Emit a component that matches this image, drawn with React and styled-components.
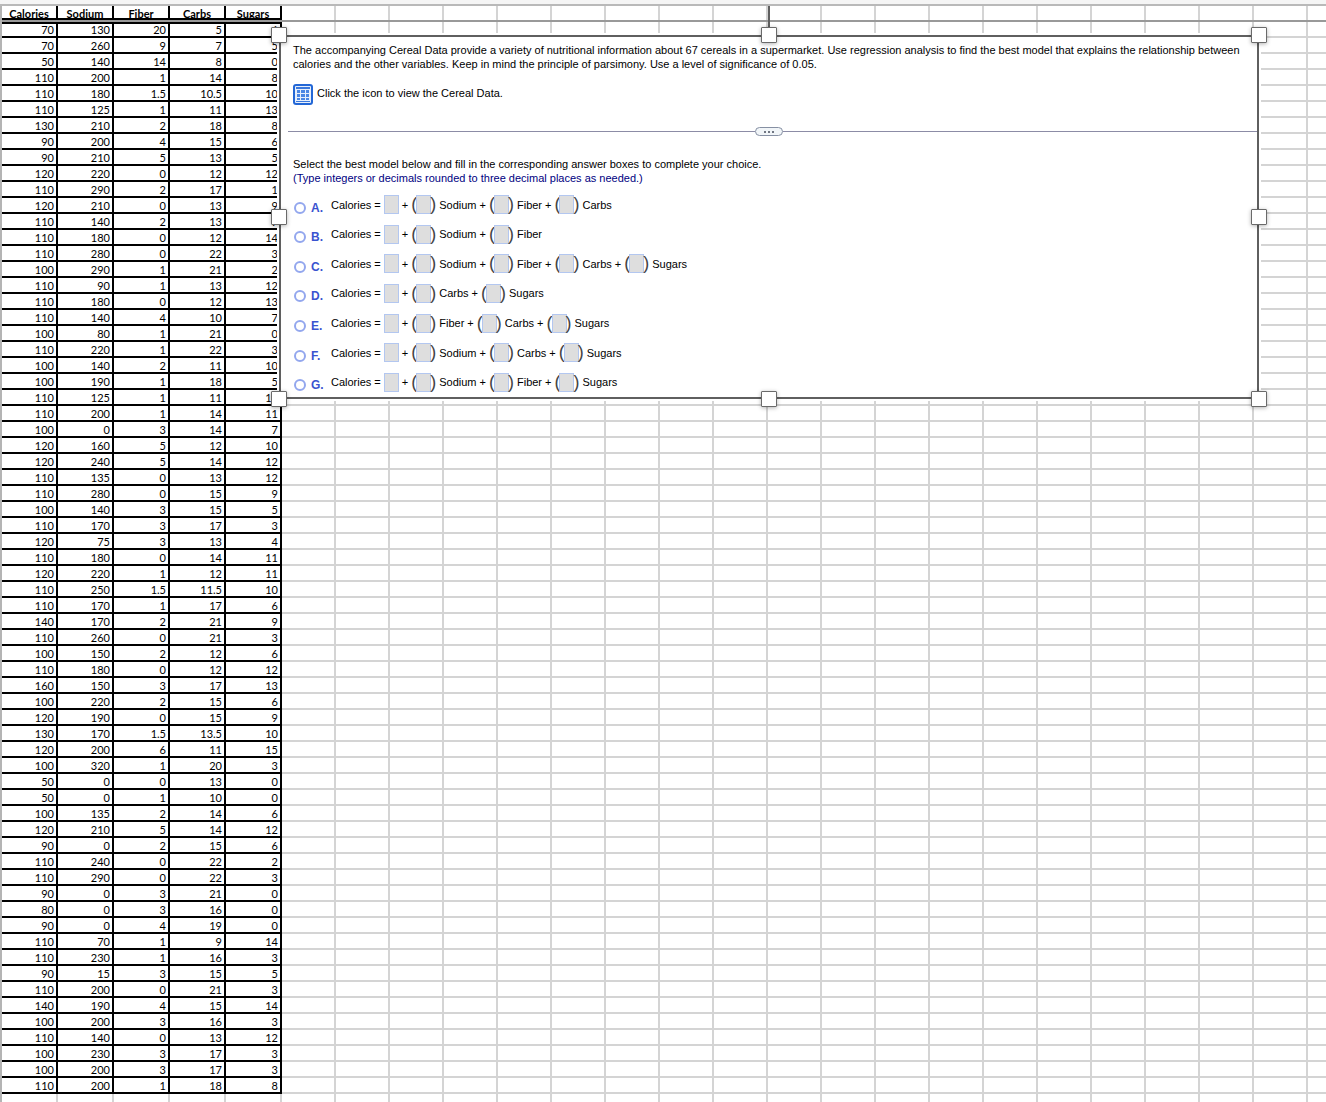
import React from 'react';
import styled, { createGlobalStyle } from 'styled-components';

const columns = ['Calories', 'Sodium', 'Fiber', 'Carbs', 'Sugars'];

const cereals = [
  [70, 130, 20, 5, 6],
  [70, 260, 9, 7, 5],
  [50, 140, 14, 8, 0],
  [110, 200, 1, 14, 8],
  [110, 180, 1.5, 10.5, 10],
  [110, 125, 1, 11, 13],
  [130, 210, 2, 18, 8],
  [90, 200, 4, 15, 6],
  [90, 210, 5, 13, 5],
  [120, 220, 0, 12, 12],
  [110, 290, 2, 17, 1],
  [120, 210, 0, 13, 9],
  [110, 140, 2, 13, 7],
  [110, 180, 0, 12, 14],
  [110, 280, 0, 22, 3],
  [100, 290, 1, 21, 2],
  [110, 90, 1, 13, 12],
  [110, 180, 0, 12, 13],
  [110, 140, 4, 10, 7],
  [100, 80, 1, 21, 0],
  [110, 220, 1, 22, 3],
  [100, 140, 2, 11, 10],
  [100, 190, 1, 18, 5],
  [110, 125, 1, 11, 13],
  [110, 200, 1, 14, 11],
  [100, 0, 3, 14, 7],
  [120, 160, 5, 12, 10],
  [120, 240, 5, 14, 12],
  [110, 135, 0, 13, 12],
  [110, 280, 0, 15, 9],
  [100, 140, 3, 15, 5],
  [110, 170, 3, 17, 3],
  [120, 75, 3, 13, 4],
  [110, 180, 0, 14, 11],
  [120, 220, 1, 12, 11],
  [110, 250, 1.5, 11.5, 10],
  [110, 170, 1, 17, 6],
  [140, 170, 2, 21, 9],
  [110, 260, 0, 21, 3],
  [100, 150, 2, 12, 6],
  [110, 180, 0, 12, 12],
  [160, 150, 3, 17, 13],
  [100, 220, 2, 15, 6],
  [120, 190, 0, 15, 9],
  [130, 170, 1.5, 13.5, 10],
  [120, 200, 6, 11, 15],
  [100, 320, 1, 20, 3],
  [50, 0, 0, 13, 0],
  [50, 0, 1, 10, 0],
  [100, 135, 2, 14, 6],
  [120, 210, 5, 14, 12],
  [90, 0, 2, 15, 6],
  [110, 240, 0, 22, 2],
  [110, 290, 0, 22, 3],
  [90, 0, 3, 21, 0],
  [80, 0, 3, 16, 0],
  [90, 0, 4, 19, 0],
  [110, 70, 1, 9, 14],
  [110, 230, 1, 16, 3],
  [90, 15, 3, 15, 5],
  [110, 200, 0, 21, 3],
  [140, 190, 4, 15, 14],
  [100, 200, 3, 16, 3],
  [110, 140, 0, 13, 12],
  [100, 230, 3, 17, 3],
  [100, 200, 3, 17, 3],
  [110, 200, 1, 18, 8],
];

const models = [
  { letter: 'A', terms: ['Sodium', 'Fiber', 'Carbs'] },
  { letter: 'B', terms: ['Sodium', 'Fiber'] },
  { letter: 'C', terms: ['Sodium', 'Fiber', 'Carbs', 'Sugars'] },
  { letter: 'D', terms: ['Carbs', 'Sugars'] },
  { letter: 'E', terms: ['Fiber', 'Carbs', 'Sugars'] },
  { letter: 'F', terms: ['Sodium', 'Carbs', 'Sugars'] },
  { letter: 'G', terms: ['Sodium', 'Fiber', 'Sugars'] },
];

const handles = [
  ['start', 'start'],
  ['middle', 'start'],
  ['end', 'start'],
  ['start', 'middle'],
  ['end', 'middle'],
  ['start', 'end'],
  ['middle', 'end'],
  ['end', 'end'],
];

const CerealTable = () => (
  <Table>
    <thead>
      <tr>
        {columns.map(name => (
          <HeadCell key={name} scope="col">
            <HeadText>{name}</HeadText>
          </HeadCell>
        ))}
      </tr>
    </thead>
    <tbody>
      {cereals.map((row, i) => (
        <Row key={i}>
          {row.map((value, j) => (
            <Cell key={columns[j]}>{value}</Cell>
          ))}
        </Row>
      ))}
    </tbody>
  </Table>
);

const DataIcon = () => (
  <svg width="20" height="21" viewBox="0 0 20 21" aria-hidden="true">
    <rect width="20" height="21" rx="3" fill="#2367d6" />
    <rect x="2" y="2" width="16" height="17" rx="1" fill="#e6effc" />
    <rect x="3" y="3" width="14" height="15" fill="#3a78dc" />
    <rect x="3" y="5" width="14" height="12" fill="#e6effc" />
    <path
      d="M4 6h3v3h-3zM8 6h4v3h-4zM13 6h3v3h-3zM4 10h3v3h-3zM8 10h4v3h-4zM13 10h3v3h-3zM4 14h3v2h-3zM8 14h4v2h-4zM13 14h3v2h-3z"
      fill="#4a86e4"
    />
  </svg>
);

const Model = ({ letter, terms }) => (
  <Option>
    <Choice>
      <Radio type="radio" name="model" value={letter} />
      <Letter>{letter}.</Letter>
    </Choice>
    <Equation>
      <span>Calories</span>
      <Equals>=</Equals>
      <AnswerBox type="text" aria-label={`Model ${letter} intercept`} />
      {terms.map(term => (
        <React.Fragment key={term}>
          <Plus>+</Plus>
          <Paren>(</Paren>
          <AnswerBox type="text" aria-label={`Model ${letter} ${term} coefficient`} />
          <Paren>)</Paren>
          <Term>{term}</Term>
        </React.Fragment>
      ))}
    </Equation>
  </Option>
);

const Question = () => (
  <Frame>
    <Content>
      <Text>
        The accompanying Cereal Data provide a variety of nutritional information about 67 cereals
        in a supermarket. Use regression analysis to find the best model that explains the
        relationship between calories and the other variables. Keep in mind the principle of
        parsimony. Use a level of significance of 0.05.
      </Text>
      <DataButton type="button">
        <DataIcon />
        <span>Click the icon to view the Cereal Data.</span>
      </DataButton>
      <Divider>
        <Line />
        <More type="button" aria-label="Show more">
          <Dot />
          <Dot />
          <Dot />
        </More>
        <Line />
      </Divider>
      <Text>Select the best model below and fill in the corresponding answer boxes to complete your choice.</Text>
      <Hint>(Type integers or decimals rounded to three decimal places as needed.)</Hint>
      <Options role="radiogroup" aria-label="Best model">
        {models.map(model => (
          <Model key={model.letter} {...model} />
        ))}
      </Options>
    </Content>
    <Stem />
    {handles.map(([x, y]) => (
      <Handle key={`${x}-${y}`} type="button" aria-label={`Resize ${x} ${y}`} $x={x} $y={y} />
    ))}
  </Frame>
);

const App = () => (
  <Sheet>
    <GlobalStyle />
    <TopStrip />
    <Panes>
      <DataPane>
        <CerealTable />
      </DataPane>
      <EmptyPane>
        <EmptyHead />
        <EmptyCells />
      </EmptyPane>
    </Panes>
    <Question />
  </Sheet>
);

export default App;

const GlobalStyle = createGlobalStyle`
  * {
    box-sizing: border-box;
  }
  body {
    margin: 0;
    background: #fff;
    overflow-x: hidden;
  }
  button {
    font: inherit;
    color: inherit;
    padding: 0;
  }
`;

const line = '#d4d4d4';

const verticals = width => `
  repeating-linear-gradient(to right, transparent 0 ${width - 2}px, ${line} ${width - 2}px ${width}px)
`;

const horizontals = `
  repeating-linear-gradient(to bottom, transparent 0 14px, ${line} 14px 16px)
`;

const Sheet = styled.main`
  position: relative;
  display: flex;
  flex-direction: column;
  min-height: 100vh;
  overflow: hidden;
`;

const TopStrip = styled.div`
  height: 6px;
  background: #f5f5f5;
  border-bottom: 2px solid #b9b9b9;
`;

const Panes = styled.div`
  display: flex;
  flex: 1;
  border-left: 2px solid #b4b4b4;
`;

const DataPane = styled.div`
  width: 280px;
  flex: none;
  background: ${verticals(56)};
`;

const EmptyPane = styled.div`
  display: flex;
  flex-direction: column;
  flex: 1;
`;

const EmptyHead = styled.div`
  height: 16px;
  border-bottom: 2px solid #999;
  background: ${verticals(54)};
`;

const EmptyCells = styled.div`
  flex: 1;
  background: ${verticals(54)}, ${horizontals};
`;

const Table = styled.table`
  width: 100%;
  table-layout: fixed;
  border-spacing: 0;
  background: #fff;
  color: #000;
  font-family: Lato, sans-serif;
  font-size: 11px;
`;

const HeadCell = styled.th`
  padding: 0;
  border-bottom: 2px solid #999;
`;

const HeadText = styled.div`
  height: 14px;
  line-height: 16px;
  overflow: hidden;
  border-right: 2px solid #000;
  border-bottom: 2px solid #000;
`;

const Row = styled.tr`
  &:first-child td {
    box-shadow: inset 0 2px #000;
  }
`;

const Cell = styled.td`
  padding: 1px 2px 0 0;
  line-height: 13px;
  text-align: right;
  border-right: 2px solid #000;
  border-bottom: 2px solid #000;
`;

const Frame = styled.section`
  position: absolute;
  top: 33px;
  left: 277px;
  right: 65px;
  padding: 2px;
  background: #fff;
  color: #000;
  font-family: 'Liberation Sans', Arial, sans-serif;
  font-size: 11px;
  line-height: 14px;
`;

const Content = styled.div`
  border: 2px solid #5f5f5f;
  padding: 6px 0 5px 12px;
`;

const Text = styled.p`
  margin: 0;
`;

const Hint = styled(Text)`
  color: #00007f;
`;

const DataButton = styled.button`
  display: flex;
  align-items: flex-start;
  gap: 4px;
  margin-top: 13px;
  border: 0;
  background: none;
  line-height: 18px;
  cursor: pointer;
`;

const Divider = styled.div`
  display: flex;
  align-items: center;
  margin: 22px 0 21px -5px;
`;

const Line = styled.div`
  flex: 1;
  height: 1px;
  background: #8c8ca6;
  &:first-child {
    flex: none;
    width: calc(50% - 18px);
  }
`;

const More = styled.button`
  display: flex;
  align-items: center;
  justify-content: center;
  gap: 2px;
  width: 28px;
  height: 9px;
  border: 1px solid #8690a3;
  border-radius: 5px;
  background: #f1f5f8;
`;

const Dot = styled.span`
  width: 2px;
  height: 2px;
  border-radius: 1px;
  background: #454b5c;
`;

const Options = styled.div`
  display: flex;
  flex-direction: column;
  justify-content: space-between;
  height: 197px;
  margin-top: 10px;
`;

const Option = styled.div`
  display: flex;
  align-items: center;
  height: 19px;
`;

const Choice = styled.label`
  display: flex;
  align-items: center;
  gap: 5px;
  width: 38px;
  padding-top: 6px;
`;

const Radio = styled.input`
  appearance: none;
  width: 12px;
  height: 12px;
  margin: 0 0 0 1px;
  border: 2px solid #93a7ee;
  border-radius: 50%;
  background: #fff;
  &:checked {
    box-shadow: inset 0 0 0 2px #fff;
    background: #3a53d0;
  }
`;

const Letter = styled.span`
  font-size: 12px;
  font-weight: bold;
  color: #3a53d0;
`;

const Equation = styled.div`
  display: flex;
  align-items: center;
`;

const Equals = styled.span`
  margin: 0 3px 0 3px;
`;

const AnswerBox = styled.input`
  width: 15px;
  height: 19px;
  padding: 0;
  border: 1px solid #b3c7f0;
  border-radius: 0;
  background: #dedede;
  font: inherit;
  text-align: center;
`;

const Plus = styled.span`
  margin: 0 3px;
`;

const Paren = styled.span`
  width: 6px;
  margin: 0 -1px 0 0;
  font-size: 18px;
  line-height: 19px;
  color: #444;
  ${AnswerBox} + & {
    margin: 0 0 0 -1px;
  }
`;

const Term = styled.span`
  margin-left: 3px;
`;

// line up to the rotation grip above the frame
const Stem = styled.div`
  position: absolute;
  bottom: 100%;
  left: calc(50% - 1px);
  width: 2px;
  height: 27px;
  background: #5f5f5f;
`;

const edge = {
  start: '-6px',
  middle: 'calc(50% - 8px)',
  end: 'calc(100% - 10px)',
};

const Handle = styled.button`
  position: absolute;
  left: ${({ $x }) => edge[$x]};
  top: ${({ $y }) => edge[$y]};
  width: 16px;
  height: 16px;
  border: 1px solid #6a6a6a;
  border-radius: 1px;
  background: #fff;
  box-shadow: 0 1px 4px rgba(0, 0, 0, 0.3);
`;
